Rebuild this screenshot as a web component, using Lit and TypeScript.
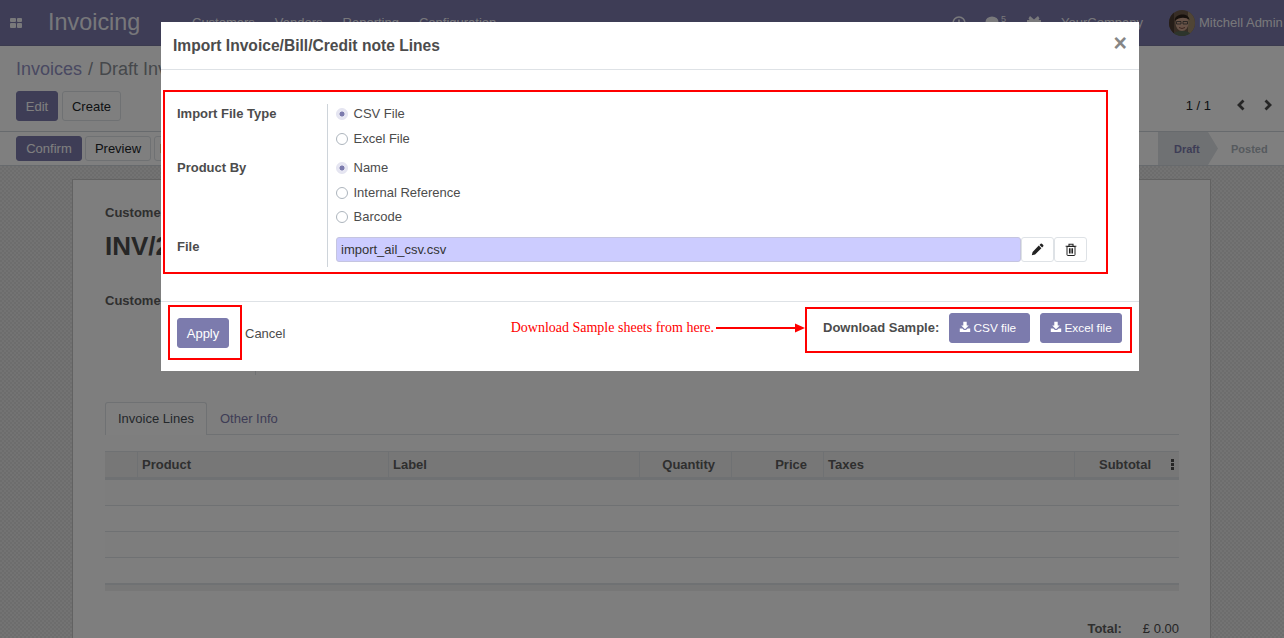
import { LitElement, html, css, svg } from "lit";
import { customElement } from "lit/decorators.js";

const downloadIcon = svg`<svg class="dl" viewBox="0 0 12 12" width="12" height="12"><path fill="#fff" d="M4.300 0.800h3.400v3.600h2.100L6 8.200 2.200 4.400h2.100z"/><path fill="#fff" d="M0.800 7.400h2.600L5 9h2l1.600-1.600h2.600v3.600H0.800z"/></svg>`;

@customElement("app-root")
export class AppRoot extends LitElement {
  static styles = css`
    :host { display: block; width: 100%; height: 100vh; overflow: hidden; position: relative; font-family: "Liberation Sans", Arial, sans-serif; font-size: 13px; color: #4c4c4c; background: #fff; }
    * { box-sizing: border-box; }
    .nav { height: 46px; background: #7c7bad; display: flex; align-items: center; color: rgba(255,255,255,.9); border-bottom: 1px solid #77769f; }
    .apps { margin-left: 10px; width: 12px; height: 10px; display: grid; grid-template-columns: 1fr 1fr; gap: 1px; }
    .apps i { background: #fff; opacity: .9; border-radius: 1px; }
    .brand { margin-left: 26px; font-size: 23.4px; width: 144px; }
    .menu { display: flex; gap: 20px; }
    .sys { margin-left: auto; display: flex; align-items: center; }
    .ico { display: block; }
    .clock { margin-right: 19px; }
    .chat { margin-right: 2px; }
    .sup { font-size: 9px; margin-right: 21px; margin-top: -8px; }
    .gift { margin-right: 20px; }
    .co { margin-right: 26px; }
    .avatar { width: 26px; height: 26px; border-radius: 50%; margin-right: 4px; display: block; }
    .user { width: 85px; white-space: nowrap; }

    .cp { height: 86px; border-bottom: 1px solid #ced4da; padding: 11px 11px 0 16px; }
    .crumbs { font-size: 18px; line-height: 24px; color: #9392c4; display: flex; gap: 6px; }
    .crumbs b { font-weight: 400; color: #8b9096; }
    .cp-row { display: flex; align-items: center; margin-top: 10px; }
    .btn { height: 30px; display: inline-flex; align-items: center; justify-content: center; border-radius: 3px; border: 1px solid #7c7bad; background: #7c7bad; color: #fff; font-size: 13px; white-space: nowrap; }
    .ghost { background: #fff; border-color: #dee2e6; color: #212529; }
    .edit { width: 42px; }
    .create { width: 59px; margin-left: 4px; }
    .pager { margin-left: auto; display: flex; align-items: center; color: #212529; margin-top: -2px; }
    .pg-n { margin-right: 25px; }
    .pg-l { margin-right: 17px; }

    .status { height: 34px; border-bottom: 1px solid #ced4da; display: flex; padding-left: 16px; align-items: center; }
    .s-btn { height: 25px; }
    .confirm { width: 66px; }
    .preview { width: 66px; margin-left: 3px; }
    .more { width: 60px; margin-left: 3px; }
    .steps { margin-left: auto; display: flex; height: 33px; align-self: flex-start; font-size: 11px; font-weight: 700; }
    .draft { width: 60px; background: #dee2e6; clip-path: polygon(0 0, 50px 0, 60px 50%, 50px 100%, 0 100%); display: flex; align-items: center; padding-left: 16px; color: #7c7bad; }
    .posted { width: 66px; display: flex; align-items: center; padding-left: 13px; color: #adb5bd; }

    .content { height: 472px; padding: 13px 73px 0 72px; background-color: #e6e6e6; background-image: conic-gradient(#dadada 25%, transparent 0 50%, #dadada 0 75%, transparent 0); background-size: 4px 4px; }
    .sheet { background: #fcfcfc; border: 1px solid #c4c4c4; height: 600px; padding: 25px 31px 0 32px; color: #4c4c4c; }
    .f-label { font-weight: 700; line-height: 16px; color: #5f5f5f; }
    .inv { font-size: 26px; font-weight: 700; line-height: 32px; margin-top: 9px; color: #4c4c4c; }
    .cust { display: flex; height: 82px; margin-top: 31px; }
    .cust div { width: 151px; border-right: 1px solid #dee2e6; }
    .tabs { margin-top: 27px; height: 33px; border-bottom: 1px solid #dee2e6; display: flex; }
    .tab { height: 33px; display: flex; align-items: center; padding: 0 12px; }
    .tab.on { background: #fff; border: 1px solid #dee2e6; border-bottom: 0; border-radius: 3px 3px 0 0; color: #495057; width: 102px; padding-bottom: 1px; }
    .tab.off { color: #7c7bad; margin-left: 1px; }
    .thead, .trow { display: grid; grid-template-columns: 33px 251px 251px 92px 92px 251px 104px; }
    .thead { margin-top: 16px; height: 29px; background: #eee; border-top: 1px solid #dee2e6; border-bottom: 3px solid #dee2e6; font-weight: 700; color: #5f5f5f; }
    .thead > div { border-right: 1px solid #dee2e6; display: flex; align-items: center; padding: 0 4px; line-height: 24px; }
    .thead > div:last-child { border-right: 0; justify-content: flex-end; padding-right: 0; }
    .thead .r { justify-content: flex-end; padding-right: 16px; }
    .sub { margin-right: 20px; }
    .kebab { display: flex; flex-direction: column; gap: 1px; margin-right: 5px; }
    .kebab i { width: 3px; height: 3px; background: #4c4c4c; }
    .trow { height: 26px; border-bottom: 1px solid #dee2e6; }
    .trow.odd { background: #fbfbfb; }
    .tfoot { height: 7px; background: #eee; border-top: 1px solid #dee2e6; }
    .total { display: flex; justify-content: flex-end; margin-top: 30px; line-height: 16px; }
    .total b { color: #5f5f5f; margin-right: 21px; }

    .backdrop { position: absolute; inset: 0; background: rgba(0,0,0,.5); }
    .modal { position: absolute; left: 161px; top: 22px; width: 978px; height: 349px; background: #fff; display: flex; flex-direction: column; }
    .m-head { height: 48px; border-bottom: 1px solid #dee2e6; display: flex; align-items: center; justify-content: space-between; padding: 0 12px 0 12px; flex: none; }
    .m-title { font-size: 15.6px; font-weight: 700; color: #4c4c4c; }
    .close { font-size: 23px; font-weight: 700; color: #868686; line-height: 20px; margin-top: -6px; }
    .m-body { flex: none; height: 232px; padding: 20px 31px 0 2px; border-bottom: 1px solid #dee2e6; }
    .form { border: 2px solid #f00; height: 184px; display: grid; grid-template-columns: 162px 1fr; padding: 12px 19px 5px 0; align-content: start; }
    .lab { font-weight: 700; line-height: 18px; padding: 1px 0 0 12px; color: #4c4c4c; }
    .val { border-left: 1px solid #ced4da; padding-left: 8px; }
    .g1 { padding-bottom: 11px; }
    .g2 { padding-bottom: 12px; }
    .opts { display: flex; flex-direction: column; }
    .g1.opts { gap: 7px; }
    .g2.opts { gap: 6.5px; }
    .opt { height: 18px; display: flex; align-items: center; line-height: 18px; white-space: nowrap; padding-top: 2px; }
    .radio { width: 12px; height: 12px; border-radius: 50%; border: 1px solid #adb5bd; margin-right: 5.5px; background: #fff; flex: none; }
    .radio.on { border-color: #e3e3f0; background: radial-gradient(circle, #7c7bad 0 2.2px, #e6e6f2 2.8px); }
    .file { display: flex; height: 30px; }
    .inp { flex: 1; height: 25px; background: #ccccff; border: 1px solid #c5c5e0; border-radius: 3px; padding-left: 4px; line-height: 23px; color: #333; font-size: 13px; }
    .ib { height: 25px; width: 33px; background: #fff; border: 1px solid #dee2e6; border-radius: 3px; display: flex; align-items: center; justify-content: center; }
    .m-foot { flex: 1; display: flex; align-items: flex-start; padding-top: 3px; }
    .apply-box { border: 2px solid #f00; width: 74px; height: 55px; margin-left: 7px; padding: 11px 0 0 7px; }
    .apply { width: 52px; }
    .cancel { margin-left: 3px; margin-top: 21px; line-height: 16px; color: #4c4c4c; }
    .note { margin-left: auto; margin-top: 14px; font-family: "Liberation Serif", "Times New Roman", serif; font-size: 14px; line-height: 18px; color: #f00; white-space: nowrap; }
    .arrow { margin-top: 17px; display: block; margin-left: 2px; }
    .dl-box { width: 327px; height: 46px; margin-top: 2px; margin-right: 7px; border: 2px solid #f00; display: flex; padding: 4px 0 0 16px; }
    .dl-label { font-weight: 700; line-height: 30px; width: 126px; color: #4c4c4c; }
    .dbtn { gap: 3px; font-size: 11.8px; justify-content: flex-start; padding-left: 9px; }
    .csv { width: 81px; }
    .xls { width: 82px; margin-left: 10px; }
    .dl { display: block; margin-top: -2px; margin-left: -0.5px; }
  `;

  render() {
    return html`
      <div class="nav">
        <div class="apps"><i></i><i></i><i></i><i></i></div>
        <div class="brand">Invoicing</div>
        <div class="menu"><span>Customers</span><span>Vendors</span><span>Reporting</span><span>Configuration</span></div>
        <div class="sys">
          <svg class="ico clock" width="14" height="14" viewBox="0 0 14 14"><circle cx="7" cy="7" r="6" fill="none" stroke="#fff" stroke-opacity=".9" stroke-width="1.6"/><path d="M7 3.500V7.500" stroke="#fff" stroke-width="1.400"/></svg>
          <svg class="ico chat" width="14" height="14" viewBox="0 0 14 14"><ellipse cx="7" cy="6" rx="6.500" ry="5.500" fill="#fff" fill-opacity=".9"/></svg>
          <span class="sup">5</span>
          <svg class="ico gift" width="14" height="14" viewBox="0 0 14 14"><path fill="#fff" fill-opacity=".9" d="M0 4h14v3H0zM1 8h12v6H1zM3 0l4 3.500 4-3.500 1.500 2.500-1 1.500h-9l-1-1.500z"/></svg>
          <span class="co">YourCompany</span>
          <svg class="avatar" viewBox="0 0 26 26">
            <rect width="26" height="26" fill="#6e5a4a"/>
            <rect x="19" width="7" height="26" fill="#a08a6a"/>
            <rect width="5" height="26" fill="#4a3a30"/>
            <ellipse cx="13" cy="13" rx="6.500" ry="8" fill="#cfa58e"/>
            <path d="M5.800 11C5 3 20 2 20.500 10 17 7 10 7 5.800 11z" fill="#2c2019"/>
            <path d="M7.500 11.500h4.500v2.500H7.500zM14 11.500h4.500v2.500H14z" fill="none" stroke="#3a3a3a" stroke-width=".8"/>
            <path d="M10 17.500q3 2 6 0" fill="none" stroke="#7a4a40"/>
            <path d="M3 26c1-4 6-5 10-5s9 1 10 5z" fill="#5a6a58"/>
          </svg>
          <span class="user">Mitchell Admin</span>
        </div>
      </div>
      <div class="cp">
        <div class="crumbs"><span>Invoices</span><b>/</b><b>Draft Invoice (*)</b></div>
        <div class="cp-row">
          <span class="btn edit">Edit</span><span class="btn ghost create">Create</span>
          <div class="pager">
            <span class="pg-n">1 / 1</span>
            <svg class="ico pg-l" width="10" height="12" viewBox="0 0 10 12"><path d="M7.500 1.500L3 6l4.500 4.500" fill="none" stroke="#4c4c4c" stroke-width="2.800"/></svg>
            <svg class="ico" width="10" height="12" viewBox="0 0 10 12"><path d="M2.500 1.500L7 6l-4.500 4.500" fill="none" stroke="#4c4c4c" stroke-width="2.800"/></svg>
          </div>
        </div>
      </div>
      <div class="status">
        <span class="btn s-btn confirm">Confirm</span><span class="btn ghost s-btn preview">Preview</span><span class="btn ghost s-btn more">Register</span>
        <div class="steps"><div class="draft">Draft</div><div class="posted">Posted</div></div>
      </div>
      <div class="content">
        <div class="sheet">
          <div class="f-label">Customer Invoice</div>
          <div class="inv">INV/2021/0001</div>
          <div class="cust"><div class="f-label">Customer</div></div>
          <div class="tabs"><div class="tab on">Invoice Lines</div><div class="tab off">Other Info</div></div>
          <div class="thead">
            <div></div><div>Product</div><div>Label</div><div class="r">Quantity</div><div class="r">Price</div><div>Taxes</div>
            <div><span class="sub">Subtotal</span><span class="kebab"><i></i><i></i><i></i></span></div>
          </div>
          <div class="trow odd"></div><div class="trow"></div><div class="trow odd"></div><div class="trow"></div>
          <div class="tfoot"></div>
          <div class="total"><b>Total:</b><span>£ 0.00</span></div>
        </div>
      </div>
      <div class="backdrop"></div>
      <div class="modal">
        <div class="m-head"><span class="m-title">Import Invoice/Bill/Credit note Lines</span><span class="close">×</span></div>
        <div class="m-body">
          <div class="form">
            <div class="lab">Import File Type</div>
            <div class="val opts g1">
              <div class="opt"><span class="radio on"></span>CSV File</div>
              <div class="opt"><span class="radio"></span>Excel File</div>
            </div>
            <div class="lab">Product By</div>
            <div class="val opts g2">
              <div class="opt"><span class="radio on"></span>Name</div>
              <div class="opt"><span class="radio"></span>Internal Reference</div>
              <div class="opt"><span class="radio"></span>Barcode</div>
            </div>
            <div class="lab">File</div>
            <div class="val file">
              <div class="inp">import_ail_csv.csv</div>
              <div class="ib"><svg width="13" height="13" viewBox="0 0 13 13"><path fill="#222" d="M9.700 0.700q.7-.4 1.200.1l1.300 1.300q.5.500.1 1.200L11.100 4.500 8.500 1.900zM7.800 2.600l2.600 2.600-6.300 6.300-3.300.8.800-3.300z"/></svg></div>
              <div class="ib"><svg width="12" height="13" viewBox="0 0 12 13"><path fill="none" stroke="#222" d="M2 3.500h8v8.200q0 .8-.8.800H2.800q-.8 0-.8-.8z"/><path fill="none" stroke="#222" stroke-width="1.100" d="M.6 3.200h10.800M4 3V1.200h4V3M4.500 5.200v5.300M6 5.200v5.300M7.500 5.200v5.300"/></svg></div>
            </div>
          </div>
        </div>
        <div class="m-foot">
          <div class="apply-box"><span class="btn apply">Apply</span></div>
          <span class="cancel">Cancel</span>
          <span class="note">Download Sample sheets from here.</span>
          <svg class="arrow" width="89" height="12" viewBox="0 0 89 12"><path d="M0 6h80" stroke="#f00" stroke-width="2"/><path d="M79 1.500L89 6l-10 4.500z" fill="#f00"/></svg>
          <div class="dl-box">
            <span class="dl-label">Download Sample:</span>
            <span class="btn dbtn csv">${downloadIcon}CSV file</span>
            <span class="btn dbtn xls">${downloadIcon}Excel file</span>
          </div>
        </div>
      </div>
    `;
  }
}
